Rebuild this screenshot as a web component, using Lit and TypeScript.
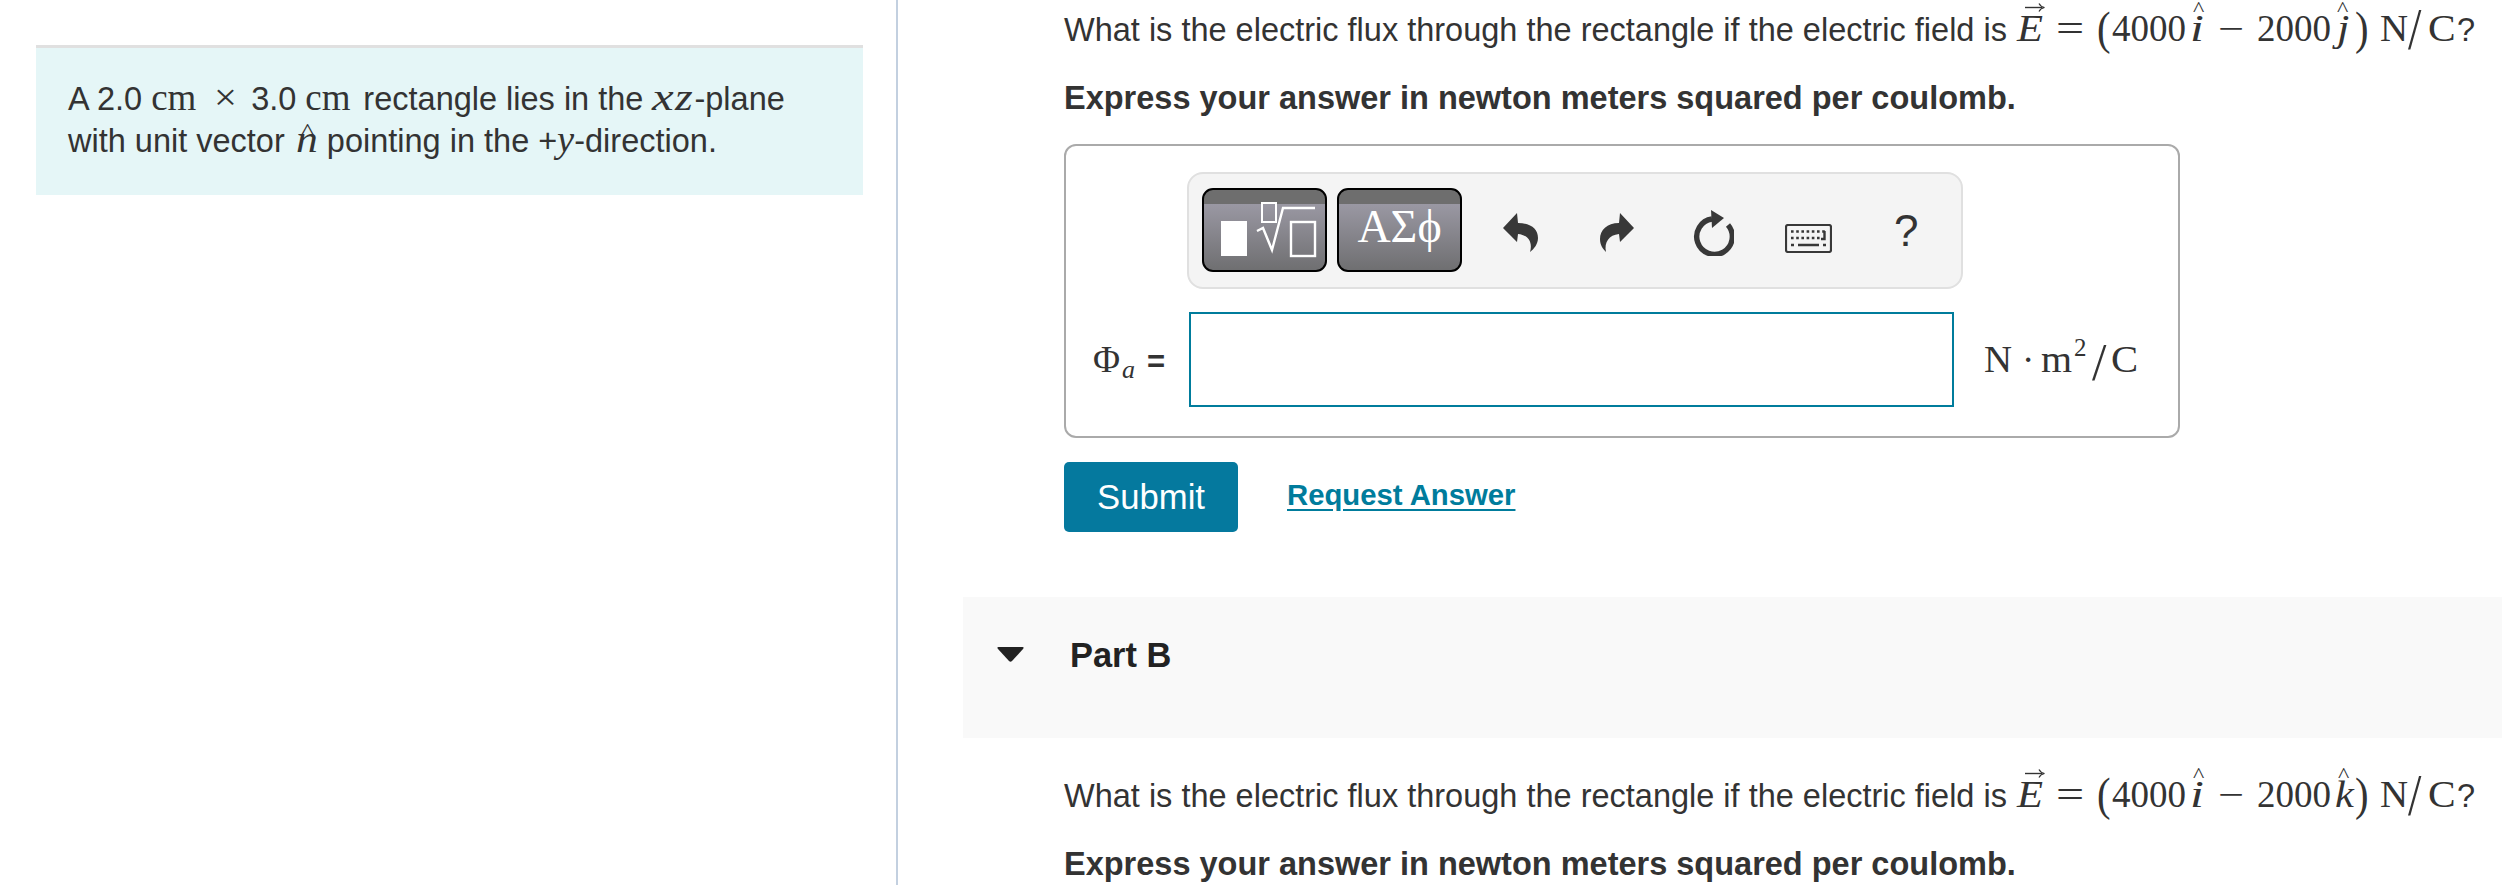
import { LitElement, html, css } from "lit";
import { customElement } from "lit/decorators.js";

const g = (txt: string, cls: string, accent: unknown = null) =>
  html`<span class="g ${cls}"><span class="t">${txt}</span>${accent}</span>`;
const hat = html`<span class="hat">^</span>`;
const arrow = html`<svg class="vec" viewBox="0 0 20 9" width="20" height="9"><path d="M0 4.5H17" stroke="#333" stroke-width="1.4" fill="none"/><path d="M14 .5C15 2.6 17 4 19.5 4.500C17 5 15 6.4 14 8.5" stroke="#333" stroke-width="1.2" fill="none"/></svg>`;

const question = (last: unknown) => html`<p class="q">What is the electric flux through the rectangle if the electric field is ${g("E", "E", arrow)}${g("=", "eq")}${g("(", "lp")}${g("4000", "num")}${g("i", "ii", hat)}${g("−", "minus")}${g("2000", "num2")}${last}${g(")", "rp")}${g("N", "N")}${g("/", "sl")}${g("C", "C")}?</p>
  <p class="q bold">Express your answer in newton meters squared per coulomb.</p>`;

@customElement("app-root")
export class AppRoot extends LitElement {
  static styles = css`
    :host { display: block; width: 2502px; height: 885px; overflow: hidden; background: #fff; color: #333;
      font-family: "Liberation Sans", Arial, sans-serif; font-size: 32.5px; line-height: 42px; }
    * { box-sizing: border-box; }
    p { margin: 0; }
    .page { display: flex; height: 885px; }
    .left { flex: 0 0 898px; border-right: 2px solid #c3d0e0; padding: 45px 33px 0 36px; }
    .intro { background: #e5f6f7; border-top: 3px solid #e0e0e0; padding: 30px 32px 33px 32px; height: 150px; white-space: nowrap; }
    .right { flex: 1; min-width: 0; padding-top: 9px; }
    .pad { padding-left: 166px; }
    .q { white-space: nowrap; height: 42px; }
    .q.bold { font-weight: 700; margin-top: 26px; }

    .g { display: inline-block; position: relative; font-family: "Liberation Serif", "Times New Roman", serif; font-size: 37px; line-height: 1; white-space: nowrap; font-weight: 400; color: #333; }
    .t { display: inline-block; transform-origin: 0 50%; }
    .E { width: 28px; margin-left: 1px; } .E .t { font-style: italic; transform: scaleX(1.15); }
    .eq { width: 28px; margin-left: 11px; } .eq .t { transform: scaleX(1.35); }
    .lp { width: 14px; margin-left: 13px; } .lp .t { transform: scale(1.1, 1.27); }
    .num, .num2 { width: 74px; }
    .num { margin-left: 1px; }
    .ii { width: 16px; margin-left: 4px; } .ii .t { font-style: italic; transform: scaleX(1.35); }
    .minus { width: 28px; margin-left: 12px; } .minus .t { transform: scaleX(1.25); }
    .num2 { margin-left: 11px; }
    .kk { width: 19px; margin-left: 4px; } .kk .t { font-style: italic; transform: scaleX(1.15); }
    .jj { width: 17px; margin-left: 6px; } .jj .t { font-style: italic; transform: scaleX(1.2); }
    .jj .hat { left: 1px; }
    .rp { width: 14px; margin-left: 1px; } .rp .t { transform: scale(1.1, 1.27); }
    .N { width: 28px; margin-left: 11px; } .N .t { transform: scaleX(1.05); }
    .sl { width: 15px; } .sl .t { transform: scale(1.3, 1.6); }
    .C { width: 29px; margin-left: 5px; } .C .t { transform: scaleX(1.12); }
    .hat { position: absolute; left: 4px; top: -7px; font-size: 20px; line-height: 12px; font-style: normal; display: inline-block; transform: scaleX(1.2); }
    .vec { position: absolute; left: 8px; top: -7px; }

    .cm { width: 48px; }
    .c2 { width: 49px; }
    .times { width: 23px; margin: 0 14px 0 15px; } .times .t { transform: scaleX(1.1); }
    .x { width: 23px; } .x .t { font-style: italic; transform: scaleX(1.32); }
    .z { width: 19px; } .z .t { font-style: italic; transform: scaleX(1.23); }
    .n { width: 22px; margin-left: 2px; } .n .t { font-style: italic; transform: scaleX(1.18); }
    .n .hat { left: 6px; top: -2px; font-size: 24px; line-height: 24px; }
    .y { width: 17px; } .y .t { font-style: italic; transform: scaleX(1.04); }

    .card { margin-top: 25px; width: 1116px; height: 294px; border: 2px solid #aaa; border-radius: 12px; padding: 26px 0 0 121px; }
    .toolbar { width: 776px; height: 117px; background: #f4f4f4; border: 2px solid #e0e0e0; border-radius: 16px; padding: 14px 0 0 13px; display: flex; align-items: flex-start; }
    .tb { width: 125px; height: 84px; border: 2px solid #000; border-radius: 11px; overflow: hidden; background: linear-gradient(#6e6e6e 0 14px, #9a98a3 14px, #6f6f71 100%); display: flex; align-items: center; justify-content: center; color: #fff; }
    .tb + .tb { margin-left: 10px; }
    .tb svg { display: block; }
    .greek { font-family: "Liberation Serif", serif; font-size: 46px; line-height: 1; padding-bottom: 6px; }
    .icon { display: block; flex: none; }
    .undo { margin: 25px 0 0 41px; }
    .redo { margin: 25px 0 0 62px; }
    .reset { margin: 22px 0 0 58px; }
    .kbd { margin: 36px 0 0 51px; }
    .help { margin: 17px 0 0 62px; font-size: 44px; line-height: 52px; color: #333; }

    .answer { display: flex; align-items: center; margin-top: 23px; margin-left: -121px; height: 95px; }
    .label { flex: 0 0 123px; padding-left: 27px; display: flex; align-items: baseline; white-space: nowrap; }
    .phi { font-family: "Liberation Serif", serif; font-size: 37px; line-height: 1; }
    .sub { font-family: "Liberation Serif", serif; font-style: italic; font-size: 26px; line-height: 1; position: relative; top: 6px; margin-left: 2px; }
    .eqs { margin-left: 12px; font-size: 31px; line-height: 1; font-weight: 700; }
    .input { flex: 0 0 765px; height: 95px; border: 2px solid #007c9c; background: #fff; }
    .unit { margin-left: 30px; white-space: nowrap; display: flex; align-items: baseline; line-height: 1; }
    .uN { width: 38px; } .uN .t { transform: scaleX(1.05); }
    .dot { width: 19px; }
    .um { width: 33px; } .um .t { transform: scaleX(1.08); }
    .sup { font-family: "Liberation Serif", serif; font-size: 25px; line-height: 1; position: relative; top: -16px; width: 18px; }
    .usl { width: 19px; } .usl .t { transform: translateY(2px) scale(1.4, 1.45); }
    .uC { width: 28px; } .uC .t { transform: scaleX(1.1); }

    .actions { display: flex; align-items: flex-start; margin-top: 24px; }
    .submit { width: 174px; height: 70px; background: #05799e; border-radius: 5px; color: #fff; font-size: 34.7px; line-height: 70px; text-align: center; }
    .link { margin: 12px 0 0 49px; font-size: 29.3px; line-height: 42px; font-weight: 700; color: #007c9c; text-decoration: underline; text-underline-offset: 4px; }

    .part { margin: 65px 0 0 65px; height: 141px; background: #f9f9f9; display: flex; align-items: flex-start; padding: 37px 0 0 34px; }
    .tri { display: block; margin-top: 13px; }
    .ptitle { margin-left: 46px; font-size: 34.4px; font-weight: 700; color: #222; line-height: 42px; }
    .second { margin-top: 37px; }
  `;

  render() {
    return html`<div class="page">
      <div class="left">
        <div class="intro">
          <div>A 2.0 ${g("cm", "cm")}${g("×", "times")}3.0 ${g("cm", "c2")} rectangle lies in the ${g("x", "x")}${g("z", "z")}-plane</div>
          <div>with unit vector ${g("n", "n", hat)} pointing in the +${g("y", "y")}-direction.</div>
        </div>
      </div>
      <div class="right">
        <div class="pad">
          ${question(g("j", "jj", hat))}
          <div class="card">
            <div class="toolbar">
              <div class="tb">
                <svg width="121" height="80" viewBox="0 0 121 80">
                  <rect x="17" y="31" width="26" height="35" fill="#fff"/>
                  <rect x="58" y="13" width="14" height="19" fill="none" stroke="#fff" stroke-width="2"/>
                  <path d="M53 41L59 38L68 60L79 18H111" fill="none" stroke="#fff" stroke-width="2.4"/>
                  <rect x="87" y="32" width="24" height="34" fill="none" stroke="#fff" stroke-width="2.4"/>
                </svg>
              </div>
              <div class="tb"><span class="greek">ΑΣϕ</span></div>
              <svg class="icon undo" width="35" height="39" viewBox="0 0 35 39"><path fill="#383838" d="M0 15L14 0L15 10C28 10 35 16 35 25C35 31 31 36 27 39C30 29 25 22 15 21L14 29Z"/></svg>
              <svg class="icon redo" width="34" height="39" viewBox="0 0 34 39"><path fill="#383838" d="M34 15L20 0L19 10C7 10 0 17 0 26C0 32 3 36 6 39C4 29 9 22 19 21L20 29Z"/></svg>
              <svg class="icon reset" width="42" height="46" viewBox="0 0 42 46"><path fill="none" stroke="#383838" stroke-width="5.4" d="M20 9A17.8 17.8 0 1 0 36 15"/><path fill="#383838" d="M19 0L32 8L20 18Z"/></svg>
              <svg class="icon kbd" width="47" height="29" viewBox="0 0 47 29">
                <rect x="1" y="1" width="45" height="27" rx="2" fill="none" stroke="#383838" stroke-width="2.2"/>
                <path stroke="#383838" stroke-width="2.4" stroke-dasharray="2.6 2.6" fill="none" d="M6 7.5H41M6 14H36"/>
                <path stroke="#383838" stroke-width="2.4" fill="none" d="M6 21H9M13 21H34M38 21H41M39.5 7V15H36"/>
              </svg>
              <span class="help">?</span>
            </div>
            <div class="answer">
              <div class="label"><span class="phi">Φ</span><span class="sub">a</span><span class="eqs">=</span></div>
              <div class="input"></div>
              <div class="unit">${g("N", "uN")}${g("·", "dot")}${g("m", "um")}<span class="sup">2</span>${g("/", "usl")}${g("C", "uC")}</div>
            </div>
          </div>
          <div class="actions">
            <div class="submit">Submit</div>
            <span class="link">Request Answer</span>
          </div>
        </div>
        <div class="part">
          <svg class="tri" width="27" height="15" viewBox="0 0 27 15"><path fill="#222" d="M1.5 0H25.5Q27.5 0 26 2L15 14Q13.500 15.500 12 14L1 2Q-.5 0 1.500 0Z"/></svg>
          <span class="ptitle">Part B</span>
        </div>
        <div class="pad second">${question(g("k", "kk", hat))}</div>
      </div>
    </div>`;
  }
}
